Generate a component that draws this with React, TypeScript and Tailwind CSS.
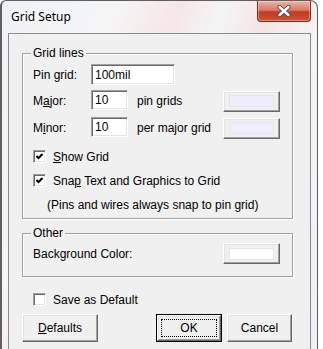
import React from 'react';

// classic 3D edges
const raised =
  'border border-t-white border-l-white border-r-[#696969] border-b-[#696969] shadow-[inset_-1px_-1px_0_#a0a0a0,inset_1px_1px_0_#e3e3e3]';
const sunken =
  'border border-t-[#a0a0a0] border-l-[#a0a0a0] border-r-white border-b-white shadow-[inset_1px_1px_0_#696969,inset_-1px_-1px_0_#e3e3e3]';
const etched = 'border border-[#a0a0a0] shadow-[inset_1px_1px_0_#fff,1px_1px_0_#fff]';

const CheckBox: React.FC<{ checked?: boolean }> = ({ checked }) => (
  <span className={`flex h-[13px] w-[13px] shrink-0 items-center justify-center bg-white ${sunken}`}>
    {checked && (
      <svg width="7" height="7" viewBox="0 0 7 7">
        <path d="M0.5 3 L2.5 5 L6.5 1" fill="none" stroke="#000" strokeWidth="2" />
      </svg>
    )}
  </span>
);

const ColorButton: React.FC<{ color: string }> = ({ color }) => (
  <button className={`ml-auto flex h-[21px] w-[57px] items-center justify-center bg-[#f0f0f0] ${raised}`}>
    <span className="h-[12px] w-[45px] border border-[#e4e4ee]" style={{ backgroundColor: color }} />
  </button>
);

const TextField: React.FC<{ value: string; width: string }> = ({ value, width }) => (
  <div className={`flex h-[20px] items-center bg-white pl-[3px] ${sunken} ${width}`}>{value}</div>
);

export default function App() {
  return (
    <div className="h-[349px] w-[323px] overflow-hidden bg-white font-['Liberation_Sans',Arial,sans-serif] text-[12px] leading-[14px] text-black">
      <div className="h-[380px] w-[318px] rounded-tl-[6px] rounded-tr-[8px] border-t border-r border-l-2 border-[#5f5f5f] bg-[linear-gradient(112deg,#eef1f4_0%,#f5f5f6_25%,#f6e6e7_38%,#f4f4f5_48%,#f7e4e4_58%,#f3f4f6_70%,#eceff3_100%)] pl-[6px] pr-[6px]">
        {/* title bar */}
        <div className="flex h-[32px] items-start">
          <span className="mt-[8px] pl-[3px] font-['Noto_Sans',sans-serif] text-[12px] leading-[16px] [text-shadow:0_0_6px_#fff]">
            Grid Setup
          </span>
          <button className="ml-auto flex h-[21px] w-[54px] items-center justify-center rounded-b-[4px] border border-t-0 border-[#7a2c20] bg-[linear-gradient(#eab2a5,#da7c68_45%,#c23a22_55%,#cf5236)] shadow-[inset_0_0_0_1px_rgba(255,255,255,0.35)]">
            <svg width="14" height="12" viewBox="0 0 14 12">
              <path d="M2.5 2 L11.5 10 M11.5 2 L2.5 10" stroke="#4a4a4a" strokeWidth="4.2" strokeLinecap="round" />
              <path d="M2.5 2 L11.5 10 M11.5 2 L2.5 10" stroke="#fff" strokeWidth="2.4" strokeLinecap="round" />
            </svg>
          </button>
        </div>

        {/* client area */}
        <div className="h-[340px] w-[303px] border border-[#8c8c8c] bg-[#f0f0f0]">
          <fieldset className={`ml-[13px] mt-[12px] w-[271px] ${etched} pb-[6px] pl-[10px] pr-[12px]`}>
            <legend className="ml-[-2px] bg-[#f0f0f0] px-[2px] leading-[14px]">Grid lines</legend>

            <div className="mt-[4px] flex h-[21px] items-center">
              <span className="w-[58px]">Pin grid:</span>
              <div className={`flex h-[21px] w-[84px] items-center bg-white pl-[3px] ${sunken}`}>100mil</div>
            </div>

            <div className="mt-[5px] flex h-[22px] items-center">
              <span className="w-[58px]">
                M<span className="underline">a</span>jor:
              </span>
              <TextField value="10" width="w-[37px] self-start" />
              <span className="ml-[9px]">pin grids</span>
              <ColorButton color="#ededfd" />
            </div>

            <div className="mt-[5px] flex h-[22px] items-center">
              <span className="w-[58px]">
                M<span className="underline">i</span>nor:
              </span>
              <TextField value="10" width="w-[37px] self-start" />
              <span className="ml-[9px]">per major grid</span>
              <ColorButton color="#ededfd" />
            </div>

            <div className="mt-[11px] flex h-[13px] items-center">
              <CheckBox checked />
              <span className="ml-[7px]">
                <span className="underline">S</span>how Grid
              </span>
            </div>

            <div className="mt-[11px] flex h-[13px] items-center">
              <CheckBox checked />
              <span className="ml-[7px]">
                Sna<span className="underline">p</span> Text and Graphics to Grid
              </span>
            </div>

            <div className="mt-[11px] pl-[14px]">(Pins and wires always snap to pin grid)</div>
          </fieldset>

          <fieldset className={`ml-[13px] mt-[7px] w-[271px] ${etched} pb-[12px] pl-[10px] pr-[12px]`}>
            <legend className="ml-[-2px] bg-[#f0f0f0] px-[2px] leading-[14px]">Other</legend>
            <div className="mt-[3px] flex h-[21px] items-center">
              <span>Background Color:</span>
              <ColorButton color="#ffffff" />
            </div>
          </fieldset>

          <div className="ml-[24px] mt-[16px] flex h-[13px] items-center">
            <CheckBox />
            <span className="ml-[7px]">Save as Default</span>
          </div>

          <div className="mt-[8px] flex items-start pl-[13px] pr-[18px]">
            <button className={`h-[28px] w-[76px] bg-[#f0f0f0] ${raised}`}>
              <span className="underline">D</span>efaults
            </button>
            <button className="relative ml-auto h-[28px] w-[66px] border border-black bg-[#f0f0f0]">
              <span className={`absolute inset-0 flex items-center justify-center ${raised}`}>OK</span>
              <span className="absolute inset-[4px] border border-dotted border-black" />
            </button>
            <button className={`ml-[5px] h-[28px] w-[65px] bg-[#f0f0f0] ${raised}`}>Cancel</button>
          </div>
        </div>
      </div>
    </div>
  );
}
